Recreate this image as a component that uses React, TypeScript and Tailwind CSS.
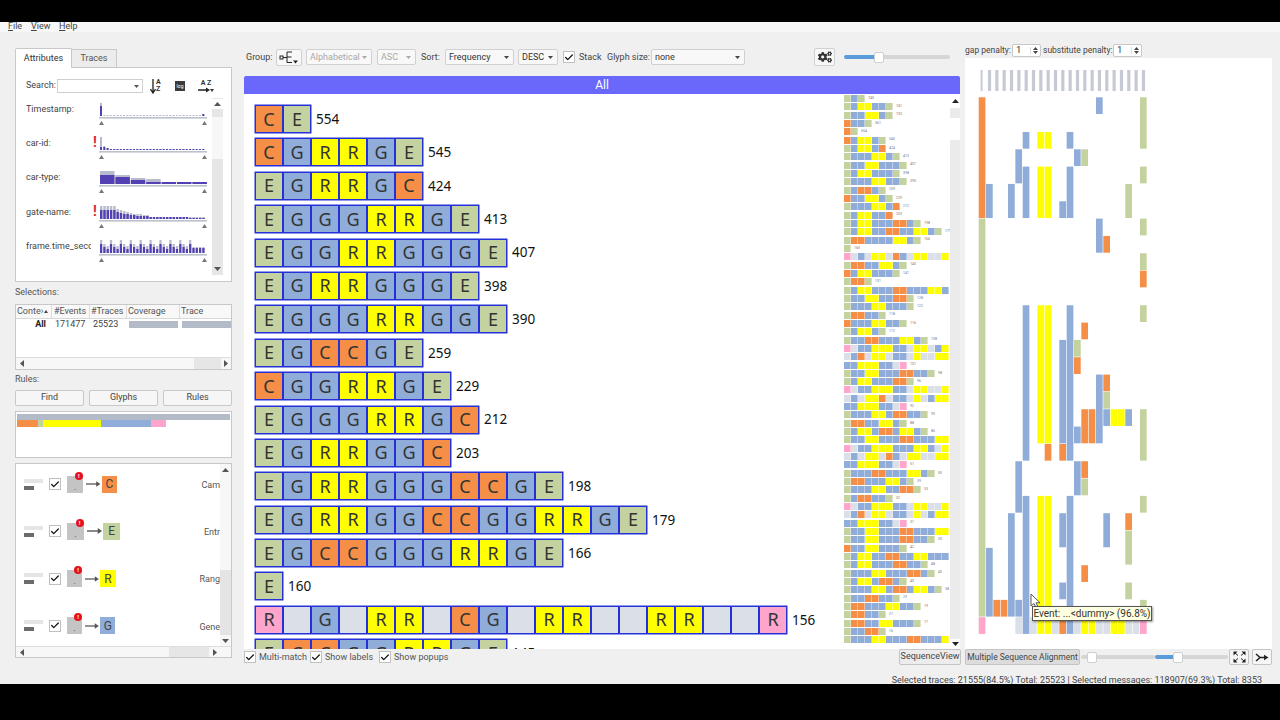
import { Check } from 'lucide-react';
import { FaCogs } from 'react-icons/fa';
import type { ReactNode } from 'react';

const FILL: Record<string, string> = {
	C: 'bg-[#f58e47]',
	E: 'bg-[#c3d29e]',
	G: 'bg-[#8fadd8]',
	R: 'bg-[#ffff00]',
	P: 'bg-[#ffa5cb]',
	_: 'bg-[#dbe0e8]',
};

const HEX: Record<string, string> = {
	C: '#f58e47',
	E: '#c3d29e',
	G: '#8fadd8',
	R: '#ffff00',
	P: '#ffa5cb',
	_: '#dbe0e8',
};

const ROWS: [string, number][] = [
	['CE', 554],
	['CGRRGE', 545],
	['EGRRGC', 424],
	['EGGGRRGE', 413],
	['EGGRRGGGE', 407],
	['EGRRGGGE', 398],
	['EGGGRRGGE', 390],
	['EGCCGE', 259],
	['CGGRRGE', 229],
	['EGGGRRGC', 212],
	['EGRRGGC', 203],
	['EGRRGGGCCGE', 198],
	['EGRRGGCCGGRRGE', 179],
	['EGCCGGGRRGE', 166],
	['E', 160],
	['P_G_RR_CG_RR__RR__P', 156],
	['ECCGGRRGE', 145],
];

// thumbnails of every sequence on the right of the list
const MINI: [string, string][] = [
	['EGE', '740'], ['EGRRGGE', '741'], ['EGGRRGE', '733'], ['CGGE', '561'], ['CE', '554'],
	['CGRRGE', '545'], ['EGRRGC', '424'], ['EGGGRRGE', '413'], ['EGGRRGGGE', '407'], ['EGRRGGGE', '398'],
	['EGGGRRGGE', '390'], ['EGCCGE', '259'], ['CGGRRGE', '229'], ['EGGGRRGC', '212'], ['EGRRGGC', '203'],
	['EGRRGGGCCGE', '198'], ['EGRRGGCCGGRRGE', '179'], ['ECCGGGGRRGE', '166'], ['E', '160'], ['P_G_RR_CG_RR__R', ''],
	['ECCGGRRGE', '145'], ['CGRRGGGE', '141'], ['ECCE', '131'], ['EGRRGGGCCGGGRRG', ''], ['EGGRRGGCCE', '128'],
	['EGGGRRGGGE', '122'], ['ECCGGE', '118'], ['CGGGRRGGE', '116'], ['EGRRGE', '112'], ['EGGCCGGGRRGE', '108'],
	['P_GGRRRGG_RR_GR', ''], ['_GC_RR_GG_R__RR', ''], ['GGRRRGG_P', '101'], ['EGGRRGGGCCGGE', '98'], ['EGRRGGGCCE', '96'],
	['P_GGRRRGG_RR__R', ''], ['_G_RRC_GG_R_GRR', ''], ['GGRRRGG_P', '92'], ['EGGGRRGCCGGE', '90'], ['ECCGGRRGE', '88'],
	['EGRRGCCGRRGE', '86'], ['EGGRRGGGCCGGGRR', ''], ['P_GGRRRGGGRRG_R', ''], ['_G_RR_CG_RR__RR', ''], ['GGRRRGG_P', '51'],
	['EGGGCCGGGRRGE', '50'], ['ECCGGGRRGE', '39'], ['EGGGRRGGCCE', '33'], ['EGCCGGE', '32'], ['P_GGRRRGG_RR__R', ''],
	['_GC_RR_GG_R_GRR', ''], ['GGRRRGG_P', '31'], ['EGGRRGGGCCGGGRR', ''], ['EGGRRGGGCCGGE', '30'], ['CGGRRGGGE', '42'],
	['EGRRGGCCGGRRGGG', ''], ['EGRRGGGCCGGE', '48'], ['EGGGRRGGGCCGE', '40'], ['EGRRGCCGE', '40'], ['EGGGRRGCCGRRGE', '38'],
	['EGGCCGGE', '29'], ['ECCGGGRRGGE', '19'], ['ECCGGE', '27'], ['ECCGGRRGGGE', '17'], ['EGGCCE', '16'],
	['EGGGRRGGGCCGGGR', ''],
];

// alignment view: column, first row, last row, colour
const RUNS: [number, number, number, string][] = [
	[0, 0, 6, 'C'], [0, 7, 29, 'E'], [0, 30, 30, 'P'],
	[16, 0, 0, 'G'], [22, 0, 2, 'E'],
	[6, 2, 2, 'G'], [8, 2, 2, 'R'], [9, 2, 2, 'R'], [12, 2, 2, 'G'],
	[5, 3, 4, 'G'], [13, 3, 3, 'G'], [14, 3, 3, 'E'],
	[6, 4, 6, 'G'], [8, 4, 6, 'R'], [9, 4, 6, 'R'], [12, 4, 6, 'G'], [22, 4, 4, 'E'],
	[1, 5, 6, 'G'], [4, 5, 6, 'G'], [20, 5, 6, 'E'], [11, 6, 6, 'G'],
	[16, 7, 8, 'G'], [22, 7, 7, 'E'], [17, 8, 8, 'C'], [22, 9, 9, 'E'], [22, 10, 10, 'C'],
	[6, 12, 20, 'G'], [8, 12, 19, 'R'], [9, 12, 19, 'R'], [12, 12, 20, 'G'], [22, 12, 12, 'E'],
	[14, 13, 13, 'C'], [11, 14, 19, 'G'], [13, 14, 14, 'E'], [13, 15, 15, 'C'],
	[16, 16, 19, 'G'], [17, 16, 16, 'C'], [17, 17, 17, 'E'],
	[17, 18, 18, 'G'], [18, 18, 18, 'R'], [19, 18, 18, 'R'], [20, 18, 18, 'G'], [22, 18, 20, 'E'],
	[14, 18, 19, 'C'], [15, 18, 19, 'C'], [13, 19, 19, 'G'],
	[9, 20, 20, 'C'], [11, 20, 20, 'C'],
	[5, 21, 23, 'G'], [13, 21, 22, 'G'], [14, 21, 21, 'C'], [14, 22, 22, 'E'],
	[6, 23, 30, 'G'], [8, 23, 30, 'R'], [9, 23, 30, 'R'], [12, 23, 30, 'G'], [22, 23, 23, 'E'],
	[4, 24, 29, 'G'], [11, 24, 25, 'G'], [17, 24, 25, 'G'], [20, 24, 24, 'C'], [20, 25, 26, 'E'],
	[1, 26, 29, 'G'], [14, 27, 27, 'C'], [11, 28, 28, 'G'], [20, 28, 28, 'E'],
	[2, 29, 29, 'C'], [3, 29, 29, 'C'], [5, 29, 29, 'G'], [22, 29, 29, 'E'],
	[5, 30, 30, '_'], [7, 30, 30, '_'], [10, 30, 30, '_'], [11, 30, 30, 'C'], [13, 30, 30, '_'],
	[14, 30, 30, 'R'], [15, 30, 30, 'R'], [16, 30, 30, '_'], [17, 30, 30, '_'],
	[18, 30, 30, 'R'], [19, 30, 30, 'R'], [20, 30, 30, '_'], [21, 30, 30, '_'], [22, 30, 30, 'P'],
];

const HISTS: { name: string; warn?: boolean; bars: [number, number][]; barW: number; step: number }[] = [
	{
		name: 'Timestamp:',
		barW: 2,
		step: 3.3,
		bars: [[13, 10], ...Array.from({ length: 30 }, (): [number, number] => [1, 0]), [2, 2]],
	},
	{
		name: 'car-id:',
		warn: true,
		barW: 2,
		step: 3.3,
		bars: [[13, 3], [4, 3], [2, 2], ...Array.from({ length: 29 }, (): [number, number] => [1, 1])],
	},
	{
		name: 'car-type:',
		barW: 14.5,
		step: 15.4,
		bars: [[13, 9], [9, 7], [6, 4], [5, 2], [2, 2], [2, 2], [2, 2]],
	},
	{
		name: 'gate-name:',
		warn: true,
		barW: 2.4,
		step: 3.3,
		bars: [
			[13, 9], [13, 9], [13, 9], [13, 9], [13, 9], [10, 7], [9, 6], [8, 5], [7, 5], [6, 4], [5, 4], [5, 3], [5, 3], [4, 3],
			[4, 3], [2, 2], [2, 2], [2, 2], [2, 2], [2, 2], [2, 2], [2, 2], [2, 2], [2, 2], [2, 2], [2, 2], [2, 2], [2, 1], [2, 1], [2, 1], [2, 1], [2, 1],
		],
	},
	{
		name: 'frame.time_second',
		barW: 2.2,
		step: 3.3,
		bars: Array.from({ length: 32 }, (_, i): [number, number] =>
			i < 28 ? (i % 3 === 0 ? [13, 9] : i % 3 === 1 ? [9, 6] : [7, 4]) : [6, 5],
		),
	},
];

function Triangle({ up, dark }: { up?: boolean; dark?: boolean }) {
	const color = dark ? '#222222' : '#555555';
	return (
		<svg width="7" height="4" viewBox="0 0 7 4" className="shrink-0">
			<polygon points={up ? '3.5,0 7,4 0,4' : '0,0 7,0 3.5,4'} fill={color} />
		</svg>
	);
}

function TriangleSide({ right }: { right?: boolean }) {
	return (
		<svg width="4" height="7" viewBox="0 0 4 7" className="shrink-0">
			<polygon points={right ? '0,0 4,3.5 0,7' : '4,0 0,3.5 4,7'} fill="#555555" />
		</svg>
	);
}

function Box({ className = '', children }: { className?: string; children?: ReactNode }) {
	return <div className={`border border-[#c8c8c8] bg-white ${className}`}>{children}</div>;
}

function Tick({ className = '' }: { className?: string }) {
	return (
		<div className={`flex h-[12px] w-[12px] shrink-0 items-center justify-center border border-[#c0c0c0] bg-white ${className}`}>
			<Check size={11} strokeWidth={3} color="#111111" />
		</div>
	);
}

function Select({ label, className = '', disabled }: { label: string; className?: string; disabled?: boolean }) {
	return (
		<div
			className={`flex h-[16px] shrink-0 items-center justify-between rounded-[2px] border border-[#d0d0d0] bg-[#f8f8f8] pl-[3px] pr-[4px] pt-[1px] text-[9px] ${disabled ? 'text-[#a8a8a8]' : 'text-[#333333]'} ${className}`}
		>
			<span>{label}</span>
			<svg width="5" height="3" viewBox="0 0 5 3">
				<polygon points="0,0 5,0 2.5,3" fill={disabled ? '#a8a8a8' : '#444444'} />
			</svg>
		</div>
	);
}

function Slider({ fill, before, after, className = '' }: { fill?: boolean; before: number; after: number; className?: string }) {
	return (
		<div className={`flex h-[12px] shrink-0 items-center ${className}`}>
			<div style={{ width: before }} className={`h-[4px] rounded-l-full ${fill ? 'bg-[#5b9bd9]' : 'bg-[#d6d6d6]'}`} />
			<div className="h-[11px] w-[10px] shrink-0 rounded-[2px] border border-[#cfcfcf] bg-white" />
			<div style={{ width: after }} className="h-[4px] rounded-r-full bg-[#d6d6d6]" />
		</div>
	);
}

function Hist({ bars, barW, step }: { bars: [number, number][]; barW: number; step: number }) {
	return (
		<svg width="110" height="25" viewBox="0 0 110 25" className="shrink-0">
			{bars.map(([full, sel], i) => (
				<g key={i}>
					<rect x={1 + i * step} y={14 - full} width={barW} height={full} fill="#b6bccb" />
					<rect x={1 + i * step} y={14 - sel} width={barW} height={sel} fill="#5340b2" />
				</g>
			))}
			<rect x="0" y="15" width="108" height="1.6" fill="#bcc2cc" />
			<polygon points="0,23 2.5,19 5,23" fill="#777777" />
			<polygon points="103,23 105.5,19 108,23" fill="#777777" />
		</svg>
	);
}

function AttributesPanel() {
	return (
		<div className="flex flex-col">
			<div className="flex h-[19px] items-end text-[9px]">
				<div className="z-10 -mb-px flex h-[20px] w-[57px] items-center justify-center rounded-t-[2px] border border-b-0 border-[#c8c8c8] bg-white text-[#333333]">
					Attributes
				</div>
				<div className="flex h-[18px] w-[45px] items-center justify-center border border-l-0 border-b-0 border-[#c8c8c8] bg-[#ececec] text-[#555555]">
					Traces
				</div>
			</div>
			<Box className="h-[215px] overflow-hidden">
				<div className="flex h-[30px] items-center pl-[10px] pt-[6px] text-[9px] text-[#444444]">
					<span className="w-[31px]">Search:</span>
					<div className="flex h-[14px] w-[86px] items-center justify-end border border-[#d0d0d0] bg-white pr-[3px]">
						<svg width="5" height="3" viewBox="0 0 5 3">
							<polygon points="0,0 5,0 2.5,3" fill="#555555" />
						</svg>
					</div>
					<div className="ml-[7px] flex h-[16px] w-[18px] items-center">
						<svg width="6" height="15" viewBox="0 0 6 15">
							<path d="M3 0V13M0.5 10L3 14L5.5 10" stroke="#222222" strokeWidth="1.3" fill="none" />
						</svg>
						<div className="flex flex-col text-[7px] font-bold leading-[7px] text-[#333333]">
							<span>A</span>
							<span>Z</span>
						</div>
					</div>
					<div className="ml-[7px] flex h-[10px] w-[10px] items-center justify-center bg-[#3a3a3a] text-[5px] leading-none text-white">log</div>
					<div className="ml-[12px] flex w-[18px] flex-col items-center">
						<span className="text-[7px] font-bold leading-[7px] text-[#333333]">A Z</span>
						<svg width="16" height="6" viewBox="0 0 16 6">
							<path d="M0 3H9" stroke="#222222" strokeWidth="1.5" />
							<polygon points="8,0.5 12,3 8,5.5" fill="#222222" />
							<polygon points="12,2 16,2 14,5" fill="#333333" />
						</svg>
					</div>
				</div>
				<div className="flex h-[177px]">
					<div className="w-[196px] overflow-hidden pl-[10px] pt-[4px]">
						{HISTS.map((h) => (
							<div key={h.name} className="flex h-[34.2px] text-[9px] text-[#444444]">
								<div className="w-[65px] shrink-0 overflow-hidden pt-[1px] leading-[13px]">{h.name}</div>
								<div className="w-[8px] shrink-0 text-center text-[14px] font-bold leading-[13px] text-[#d8262c]">{h.warn ? '!' : ''}</div>
								<Hist bars={h.bars} barW={h.barW} step={h.step} />
							</div>
						))}
					</div>
					<div className="flex w-[11px] flex-col items-center bg-[#e6e6e6] py-[1px]">
						<div className="flex h-[10px] w-full items-center justify-center bg-white">
							<Triangle up />
						</div>
						<div className="mt-[8px] h-[42px] w-full bg-[#f7f7f7]" />
						<div className="flex-1" />
						<div className="flex h-[10px] w-full items-center justify-center">
							<Triangle />
						</div>
					</div>
				</div>
			</Box>
		</div>
	);
}

function SelectionsTable() {
	return (
		<Box className="flex h-[66px] flex-col text-[9px] text-[#444444]">
			<div className="flex h-[14px] items-center border-b border-[#d8d8d8] bg-[#f8f8f8] text-[#555555]">
				<div className="flex h-full w-[36px] items-center gap-[1px] border-r border-[#dddddd] pl-[1px]">
					<span>Conte›</span>
					<svg width="4" height="3" viewBox="0 0 4 3" className="shrink-0">
						<polygon points="2,0 4,3 0,3" fill="#444444" />
					</svg>
				</div>
				<div className="flex h-full w-[38px] items-center border-r border-[#dddddd] pl-[2px]">#Events</div>
				<div className="flex h-full w-[37px] items-center border-r border-[#dddddd] pl-[1px]">#Traces</div>
				<div className="flex h-full w-[53px] items-center border-r border-[#dddddd] pl-[1px]">Coverage</div>
				<div className="flex h-full flex-1 items-center pl-[1px]">Trace</div>
			</div>
			<div className="flex h-[11px] items-center">
				<div className="w-[30px] text-right font-bold text-[#222222]">All</div>
				<div className="ml-[9px] w-[38px]">171477</div>
				<div className="w-[36px]">25523</div>
				<div className="h-[7px] w-[49px] bg-[#b3bbc8]" />
				<div className="ml-[4px] h-[7px] flex-1 bg-[#b3bbc8]" />
			</div>
			<div className="flex-1" />
			<div className="flex h-[12px] items-center border-t border-[#dddddd] bg-[#f7f7f7]">
				<div className="flex w-[11px] justify-center"><TriangleSide /></div>
				<div className="ml-[167px] h-full w-[27px] bg-[#e6e6e6]" />
				<div className="flex flex-1 justify-center"><TriangleSide right /></div>
			</div>
		</Box>
	);
}

function RuleRow({ letter, label }: { letter: string; label: string }) {
	return (
		<div className="flex h-[18px] shrink-0 items-center pl-[8px]">
			<div className="flex w-[19px] flex-col gap-[3px]">
				<div className="h-[4px] w-[19px] bg-[#e5e5e5]" />
				<div className="h-[4px] w-[10px] bg-[#6b6b6b]" />
			</div>
			<Tick className="ml-[6px]" />
			<div className="relative ml-[6px] flex h-[17px] w-[17px] items-end justify-center bg-[#c4c4c4] text-[9px] leading-[11px] text-[#444444]">
				.
				<div className="absolute right-[0px] top-[-4px] flex h-[8px] w-[8px] items-center justify-center rounded-full bg-[#e8101c] text-[6px] font-bold leading-none text-white">
					!
				</div>
			</div>
			<svg width="16" height="8" viewBox="0 0 16 8" className="ml-[3px]">
				<path d="M0 4H12" stroke="#555555" strokeWidth="1.4" />
				<polygon points="11,1 15.5,4 11,7" fill="#555555" />
			</svg>
			<div className={`ml-[1px] flex h-[17px] w-[17px] items-center justify-center text-[12px] text-[#444444] ${FILL[letter]}`}>{letter}</div>
			<div className="ml-[84px] pt-[3px] text-[9px] text-[#555555]">{label}</div>
		</div>
	);
}

function RulesList() {
	return (
		<Box className="flex h-[195px] flex-col overflow-hidden">
			<div className="flex h-[183px]">
				<div className="flex w-[205px] flex-col gap-[29.3px] overflow-hidden pt-[11px]">
					<RuleRow letter="C" label="Cam" />
					<RuleRow letter="E" label="Entr" />
					<RuleRow letter="R" label="Rang" />
					<RuleRow letter="G" label="Gene" />
				</div>
				<div className="flex w-[11px] flex-col items-center bg-[#f7f7f7]">
					<div className="flex h-[11px] items-center"><Triangle up /></div>
					<div className="flex-1" />
					<div className="h-[65px] w-full bg-[#e4e4e4]" />
					<div className="flex h-[11px] items-center"><Triangle /></div>
				</div>
			</div>
			<div className="flex h-[11px] items-center border-t border-[#dddddd] bg-[#f7f7f7]">
				<div className="flex w-[11px] justify-center"><TriangleSide /></div>
				<div className="ml-[142px] h-full w-[40px] bg-[#e6e6e6]" />
				<div className="flex w-[12px] justify-center"><TriangleSide right /></div>
			</div>
		</Box>
	);
}

function LeftColumn() {
	return (
		<div className="ml-[15px] flex w-[217px] shrink-0 flex-col pt-[16px] text-[#444444]">
			<AttributesPanel />
			<div className="flex h-[21px] items-center pt-[1px] text-[9px] text-[#555555]">Selections:</div>
			<div className="h-[1px]" />
			<SelectionsTable />
			<div className="flex h-[19px] items-center pt-[1px] text-[9px] text-[#555555]">Rules:</div>
			<div className="mt-[1px] flex justify-between text-[9px] text-[#444444]">
				{['Find', 'Glyphs', 'Rules'].map((b) => (
					<div key={b} className="flex h-[16px] w-[69px] items-center justify-center rounded-[2px] border border-[#c8c8c8] bg-[#f6f6f6]">
						{b}
					</div>
				))}
			</div>
			<Box className="mt-[5px] h-[47px] px-[1px] pt-[2px]">
				<div className="h-[6px] bg-[#b3bbc8]" />
				<div className="flex h-[7px]">
					<div className="w-[21px] bg-[#f58e47]" />
					<div className="w-[5px] bg-[#c3d29e]" />
					<div className="w-[58px] bg-[#ffff00]" />
					<div className="w-[50px] bg-[#8fadd8]" />
					<div className="w-[15px] bg-[#ffa5cb]" />
				</div>
			</Box>
			<div className="h-[5px]" />
			<RulesList />
		</div>
	);
}

function Toolbar() {
	return (
		<div className="flex h-[18px] items-center text-[9px] text-[#444444]">
			<span className="ml-[2px] w-[30px] shrink-0 pt-[1px]">Group:</span>
			<div className="flex h-[17px] w-[26px] shrink-0 items-center justify-center rounded-[2px] border border-[#d0d0d0] bg-[#f8f8f8]">
				<svg width="20" height="13" viewBox="0 0 20 13">
					<rect x="1" y="5" width="3" height="3" fill="none" stroke="#222222" />
					<path d="M4 6.5H8M8 1V11.5M8 1H13M8 6H12.5M8 11.5H13" stroke="#222222" strokeWidth="1" fill="none" />
					<polygon points="14,9.5 19,9.5 16.5,12.5" fill="#222222" />
				</svg>
			</div>
			<Select label="Alphabetical" disabled className="ml-[4px] w-[66px]" />
			<Select label="ASC" disabled className="ml-[5px] w-[39px]" />
			<span className="ml-[5px] w-[24px] shrink-0 pt-[1px]">Sort:</span>
			<Select label="Frequency" className="w-[69px]" />
			<Select label="DESC" className="ml-[4px] w-[40px]" />
			<Tick className="ml-[5px]" />
			<span className="ml-[4px] w-[28px] shrink-0 pt-[1px]">Stack</span>
			<span className="w-[44px] shrink-0 pt-[1px]">Glyph size:</span>
			<Select label="none" className="w-[94px]" />
			<div className="ml-[69px] flex h-[18px] w-[21px] shrink-0 items-center justify-center rounded-[2px] border border-[#d0d0d0] bg-[#f8f8f8]">
				<FaCogs size={14} color="#333333" />
			</div>
			<Slider fill before={30} after={66} className="ml-[9px]" />
		</div>
	);
}

function SequenceRow({ seq, count }: { seq: string; count: number }) {
	return (
		<div className="flex h-[28px] shrink-0 items-center font-['Noto_Sans',sans-serif]">
			<div className="flex shadow-[0_0_0_0.5px_#2430d8]">
				{seq.split('').map((c, i) => (
					<div
						key={i}
						className={`flex h-[28px] w-[28px] shrink-0 items-center justify-center border border-[#2430d8] text-[18px] text-[#333333] ${FILL[c]}`}
					>
						{c === '_' ? '' : c === 'P' ? 'R' : c}
					</div>
				))}
			</div>
			<span className="ml-[5px] text-[13.5px] text-[#111111]">{count}</span>
		</div>
	);
}

function MiniRow({ seq, count }: { seq: string; count: string }) {
	return (
		<div className="flex h-[7px] shrink-0 items-center">
			{seq.split('').map((c, i) => (
				<div key={i} className={`h-[7px] w-[7px] shrink-0 border-r border-white/40 ${FILL[c]}`} />
			))}
			<span className="ml-[3px] text-[3.5px] leading-none text-[#777777]">{count}</span>
		</div>
	);
}

function MiddleColumn() {
	return (
		<div className="ml-[12px] flex w-[717px] shrink-0 flex-col pt-[16px]">
			<Toolbar />
			<div className="mr-[1px] mt-[10px] flex h-[18px] items-center justify-center rounded-t-[2px] bg-[#6a68fb] text-[12px] text-white">All</div>
			<div className="mr-[1px] flex h-[555px]">
				<div className="flex w-[600px] flex-col gap-[5.4px] overflow-hidden bg-white pl-[11px] pt-[11px]">
					{ROWS.map(([seq, count], i) => (
						<SequenceRow key={i} seq={seq} count={count} />
					))}
				</div>
				<div className="flex w-[106px] flex-col gap-[1.33px] overflow-hidden bg-white pt-[1px]">
					{MINI.map(([seq, count], i) => (
						<MiniRow key={i} seq={seq} count={count} />
					))}
				</div>
				<div className="flex w-[10px] flex-col items-center bg-[#ebebeb]">
					<div className="flex h-[14px] w-full items-center justify-center bg-white"><Triangle up dark /></div>
					<div className="mt-[10px] h-[22px] w-full bg-white" />
					<div className="flex-1" />
					<div className="flex h-[10px] w-full items-center justify-center bg-white"><Triangle dark /></div>
				</div>
			</div>
			<div className="flex h-[16px] items-center text-[9px] text-[#555555]">
				<Tick />
				<span className="ml-[3px] w-[45px] pt-[1px]">Multi-match</span>
				<Tick className="ml-[6px]" />
				<span className="ml-[3px] w-[51px] pt-[1px]">Show labels</span>
				<Tick className="ml-[3px]" />
				<span className="ml-[3px] pt-[1px]">Show popups</span>
				<div className="ml-auto flex h-[16px] w-[62px] items-center justify-center rounded-[2px] border border-[#c4c4c4] bg-[#ececec] text-[#444444]">
					SequenceView
				</div>
			</div>
		</div>
	);
}

function Spin() {
	return (
		<div className="flex h-[13px] w-[29px] shrink-0 items-center justify-between rounded-[2px] border border-[#c8c8c8] bg-white pl-[3px] pr-[2px] text-[9.5px] text-[#333333]">
			<span>1</span>
			<div className="flex flex-col gap-[1px] border-l border-[#dddddd] pl-[2px]">
				<svg width="5" height="3" viewBox="0 0 5 3"><polygon points="2.5,0 5,3 0,3" fill="#444444" /></svg>
				<svg width="5" height="3" viewBox="0 0 5 3"><polygon points="0,0 5,0 2.5,3" fill="#444444" /></svg>
			</div>
		</div>
	);
}

function Alignment() {
	const colW = 7.33;
	const rowH = 17.33;
	return (
		<svg width="190" height="590" viewBox="0 0 190 590">
			{Array.from({ length: 23 }, (_, c) => (
				<rect key={c} x={15.6 + c * colW} y={12} width={c === 0 ? 2 : 3.2} height={21} fill="#c5cad4" />
			))}
			{RUNS.map(([c, a, b, k], i) => (
				<rect
					key={i}
					x={13.7 + c * colW}
					y={39.3 + a * rowH}
					width={6.7}
					height={(b - a + 1) * rowH - 0.6}
					fill={HEX[k]}
				/>
			))}
		</svg>
	);
}

function RightColumn() {
	return (
		<div className="ml-[4px] flex w-[307px] shrink-0 flex-col pt-[10px]">
			<div className="flex h-[16px] items-center text-[8.5px] text-[#444444]">
				<span className="w-[47px] shrink-0">gap penalty:</span>
				<Spin />
				<span className="ml-[2px] w-[70px] shrink-0">substitute penalty:</span>
				<Spin />
			</div>
			<div className="relative h-[591px] overflow-hidden bg-white">
				<Alignment />
				<svg width="11" height="16" viewBox="0 0 11 16" className="absolute left-[65px] top-[535px]">
					<path d="M1 1V13L4 10.5L6 15L8 14L6 9.8H10Z" fill="#ffffff" stroke="#555555" strokeWidth="1" />
				</svg>
				<div className="absolute left-[67px] top-[548px] flex h-[15px] w-[120px] items-center justify-center border border-[#555555] bg-[#ffffe1] text-[10px] text-[#333333] shadow-[1px_1px_2px_rgba(0,0,0,0.4)]">
					{'Event: ...<dummy> (96.8%)'}
				</div>
			</div>
			<div className="flex h-[16px] items-center">
				<div className="flex h-[16px] w-[115px] shrink-0 items-center justify-center rounded-[2px] border border-[#c4c4c4] bg-[#dcdcdc] text-[8.5px] text-[#444444]">
					Multiple Sequence Alignment
				</div>
				<Slider before={6} after={58} className="ml-[1px]" />
				<Slider fill before={18} after={45} />
				<div className="ml-[1px] flex h-[16px] w-[20px] shrink-0 items-center justify-center rounded-[2px] border border-[#c4c4c4] bg-[#f6f6f6]">
					<svg width="13" height="12" viewBox="0 0 13 12">
						<path d="M0.5 0.5H4.5L0.5 4.5ZM12.5 0.5H8.5L12.5 4.5ZM0.5 11.5H4.5L0.5 7.5ZM12.5 11.5H8.5L12.5 7.5Z" fill="#222222" />
						<path d="M2 2L5 4.5M11 2L8 4.5M2 10L5 7.5M11 10L8 7.5" stroke="#222222" strokeWidth="1" />
					</svg>
				</div>
				<div className="ml-[3px] flex h-[16px] w-[20px] shrink-0 items-center justify-center rounded-[2px] border border-[#c4c4c4] bg-[#f6f6f6]">
					<svg width="14" height="9" viewBox="0 0 14 9">
						<path d="M1 1L5 4.5L1 8M5 4.5H10" stroke="#222222" strokeWidth="1.5" fill="none" />
						<polygon points="9,1.8 13.5,4.5 9,7.2" fill="#222222" />
					</svg>
				</div>
			</div>
		</div>
	);
}

export default function App() {
	return (
		<div className="flex h-[720px] w-[1280px] flex-col overflow-hidden whitespace-nowrap bg-black font-['Roboto',sans-serif]">
			<div className="h-[22px] shrink-0" />
			<div className="flex h-[662px] shrink-0 flex-col overflow-hidden bg-[#f0f0f0]">
				<div className="flex h-[10px] shrink-0 items-start bg-[#f7f7f7] text-[9px] leading-[9px] text-[#444444]">
					<span className="ml-[8px] w-[23px]"><u>F</u>ile</span>
					<span className="w-[28px]"><u>V</u>iew</span>
					<span><u>H</u>elp</span>
				</div>
				<div className="flex h-[633px] shrink-0">
					<LeftColumn />
					<MiddleColumn />
					<RightColumn />
				</div>
				<div className="flex h-[19px] shrink-0 justify-end pr-[18px] pt-[9px] text-[9px] leading-[13px] text-[#444444]">
					Selected traces: 21555(84.5%) Total: 25523 | Selected messages: 118907(69.3%) Total: 8353
				</div>
			</div>
		</div>
	);
}
